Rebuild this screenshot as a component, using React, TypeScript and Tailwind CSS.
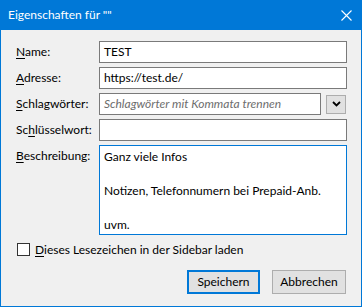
import React from 'react';

const font = { fontFamily: 'Lato, "Noto Sans", "DejaVu Sans", sans-serif' };

function Label({ pre, ul, post }: { pre?: string; ul: string; post: string }) {
  return (
    <span className="text-[12px] text-black leading-[22px] whitespace-nowrap">
      {pre}
      <span className="underline underline-offset-2">{ul}</span>
      {post}
    </span>
  );
}

function Field({ value }: { value?: string }) {
  return (
    <div className="h-[22px] bg-white border border-[#7a7a7a] px-[4px] text-[12px] leading-[20px] text-black">
      {value}
    </div>
  );
}

export default function App() {
  return (
    <div className="w-[362px] h-[307px] bg-[#f0f0f0] border border-t-0 border-[#0078d7] flex flex-col" style={font}>
      {/* title bar */}
      <div className="h-[30px] bg-[#0078d7] flex items-center justify-between pl-[8px] pr-[9px] -mx-px">
        <span className="text-white text-[12px]">Eigenschaften für ""</span>
        <svg width="11" height="11" viewBox="0 0 11 11" className="mr-px">
          <path d="M0.5 0.5 L10.5 10.5 M10.5 0.5 L0.5 10.5" stroke="white" strokeWidth="1.1" />
        </svg>
      </div>

      <div className="pt-[11px] pl-[15px] pr-[14px]">
        <div className="grid grid-cols-[83px_1fr] gap-y-[4px]">
          <Label ul="N" post="ame:" />
          <Field value="TEST" />

          <Label ul="A" post="dresse:" />
          <Field value="https://test.de/" />

          <Label ul="S" post="chlagwörter:" />
          <div className="flex items-center gap-[5px]">
            <div className="flex-1 h-[22px] bg-white border border-[#7a7a7a] px-[4px] text-[12px] leading-[20px] italic text-[#6d6d6d]">
              Schlagwörter mit Kommata trennen
            </div>
            <div className="w-[20px] h-[19px] bg-[#e1e1e1] border border-[#adadad] flex items-center justify-center mr-px">
              <svg width="9" height="6" viewBox="0 0 9 6">
                <path d="M1 1 L4.5 4.5 L8 1" fill="none" stroke="black" strokeWidth="1.8" />
              </svg>
            </div>
          </div>

          <Label pre="Sc" ul="h" post="lüsselwort:" />
          <Field />

          <div className="leading-[16px]">
            <Label ul="B" post="eschreibung:" />
          </div>
          <div className="h-[90px] bg-white border border-[#0078d7] px-[4px] py-[2px] text-[12px] leading-[17px] text-black">
            <div>Ganz viele Infos</div>
            <div>&nbsp;</div>
            <div>Notizen, Telefonnumern bei Prepaid-Anb.</div>
            <div>&nbsp;</div>
            <div>uvm.</div>
          </div>
        </div>

        <div className="flex items-center mt-[8px] ml-[1px] h-[13px]">
          <div className="w-[13px] h-[13px] bg-white border border-[#333333]" />
          <span className="ml-[5px] text-[12px] text-black">
            <span className="underline underline-offset-2">D</span>ieses Lesezeichen in der Sidebar laden
          </span>
        </div>

        <div className="flex justify-end gap-[12px] mt-[14px] pr-[1px]">
          <button className="w-[73px] h-[24px] bg-[#e1e1e1] border-2 border-[#0078d7] text-[12px] text-black">
            Speichern
          </button>
          <button className="w-[74px] h-[24px] bg-[#e1e1e1] border border-[#adadad] text-[12px] text-black">
            Abbrechen
          </button>
        </div>
      </div>
    </div>
  );
}
